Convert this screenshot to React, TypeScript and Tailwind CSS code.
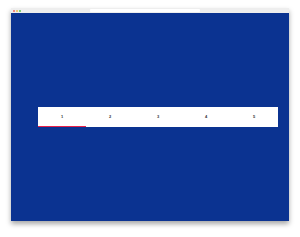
export default function App() {
  const tabs = ["1", "2", "3", "4", "5"];
  return (
    <div className="w-[300px] h-[237px] bg-white pt-[8px] pl-[11px]" style={{ fontFamily: "'Liberation Sans', Arial, sans-serif" }}>
      <div className="w-[278px] flex flex-col shadow-[0_3px_5px_rgba(0,0,0,0.35)]">
        <div className="h-[5px] bg-[#eeeeee] flex items-center px-[2px] gap-[1px] relative">
          <span className="w-[2px] h-[2px] rounded-full bg-[#f26b5e]" />
          <span className="w-[2px] h-[2px] rounded-full bg-[#f5c04f]" />
          <span className="w-[2px] h-[2px] rounded-full bg-[#5fc453]" />
          <div className="absolute left-[79px] top-[1px] w-[110px] h-[3px] bg-white rounded-[1px]" />
        </div>
        <div className="h-[208px] bg-[#0b3391] flex items-center pl-[27px]">
          <div className="w-[240px] h-[20px] bg-white flex relative">
            {tabs.map((t, i) => (
              <div key={t} className="flex-1 flex items-center justify-center relative">
                <span className="text-[4px] leading-none text-[#333] font-bold">{t}</span>
                {i === 0 && <div className="absolute left-0 right-0 bottom-0 h-[1px] bg-[#e8214a]" />}
              </div>
            ))}
          </div>
        </div>
      </div>
    </div>
  );
}
